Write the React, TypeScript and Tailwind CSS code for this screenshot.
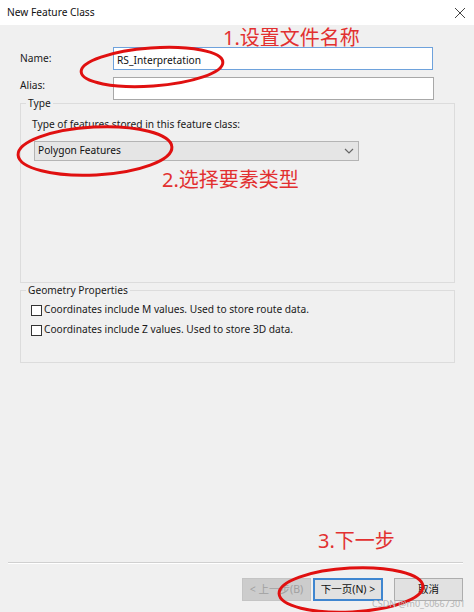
import React from 'react';

const font = { fontFamily: '"Noto Sans", "Noto Sans CJK SC", sans-serif' };

function Checkbox({ label }: { label: string }) {
  return (
    <div className="flex items-center h-[20px]">
      <span className="w-[11px] h-[11px] border border-[#333333] bg-white mr-[2px]" />
      <span className="text-[10.2px] text-[#1a1a1a]">{label}</span>
    </div>
  );
}

export default function App() {
  return (
    <div className="relative w-[474px] h-[612px] flex flex-col bg-white overflow-hidden" style={font}>
      {/* title bar */}
      <div className="h-[25px] flex items-center justify-between pl-[7px] pr-[8px] bg-white">
        <span className="text-[10.2px] text-[#111111]">New Feature Class</span>
        <svg width="12" height="12" viewBox="0 0 12 12" className="text-[#444444]">
          <path d="M1 1L11 11M11 1L1 11" stroke="currentColor" strokeWidth="1" fill="none" />
        </svg>
      </div>

      {/* body */}
      <div className="flex-1 flex flex-col bg-[#f0f0f0] pt-[24px]">
        <div className="flex items-center pl-[20px] h-[23px]">
          <span className="w-[93px] text-[10.2px] text-[#1a1a1a] -mt-[4px]">Name:</span>
          <div className="w-[320px] h-[23px] border border-[#6ea2dc] bg-white flex items-center pl-[3px] text-[10.2px] text-[#111111] -mt-[4px]">
            <span className="mt-[4px]">RS_Interpretation</span>
          </div>
        </div>
        <div className="flex items-center pl-[20px] h-[23px] mt-[5px]">
          <span className="w-[93px] text-[10.2px] text-[#1a1a1a] -mt-[6px]">Alias:</span>
          <div className="w-[321px] h-[23px] border border-[#a8a8a8] bg-white" />
        </div>

        {/* Type group */}
        <div className="relative ml-[20px] w-[435px] h-[180px] mt-[3px] border border-[#dcdcdc] pl-[11px] pt-[12px]">
          <span className="absolute -top-[8px] left-[5px] px-[2px] bg-[#f0f0f0] text-[10.2px] text-[#1a1a1a]">Type</span>
          <div className="text-[10.2px] text-[#1a1a1a] leading-[16px]">Type of features stored in this feature class:</div>
          <div className="mt-[9px] ml-[2px] w-[325px] h-[20px] border border-[#b4b4b4] bg-[#e5e5e5] flex items-center justify-between pl-[3px] pr-[4px]">
            <span className="text-[10.2px] text-[#111111]">Polygon Features</span>
            <svg width="10" height="6" viewBox="0 0 10 6">
              <path d="M1 1L5 5L9 1" stroke="#666666" strokeWidth="1.2" fill="none" />
            </svg>
          </div>
        </div>

        {/* Geometry group */}
        <div className="relative ml-[20px] w-[435px] h-[73px] mt-[7px] border border-[#dcdcdc] pl-[10px] pt-[9px]">
          <span className="absolute -top-[8px] left-[5px] px-[2px] bg-[#f0f0f0] text-[10.2px] text-[#1a1a1a]">Geometry Properties</span>
          <Checkbox label="Coordinates include M values. Used to store route data." />
          <Checkbox label="Coordinates include Z values. Used to store 3D data." />
        </div>

        <div className="flex-1" />

        {/* separator */}
        <div className="ml-[8px] w-[455px] border-t border-[#d0d0d0] border-b border-b-white" />

        {/* buttons */}
        <div className="flex justify-end pr-[11px] mt-[14px] mb-[11px]">
          <div className="w-[69px] h-[23px] border border-[#c4c4c4] bg-[#cccccc] flex items-center justify-center text-[10.5px] text-[#a0a0a0]">
            &lt; 上一步(B)
          </div>
          <div className="w-[70px] h-[23px] ml-[2px] border-2 border-[#3f86d0] bg-[#e1e1e1] flex items-center justify-center text-[10.5px] text-[#111111]">
            下一页(N) &gt;
          </div>
          <div className="w-[69px] h-[23px] ml-[11px] border border-[#adadad] bg-[#e1e1e1] flex items-center justify-center text-[10.5px] text-[#111111]">
            取消
          </div>
        </div>
      </div>

      {/* annotations */}
      <span className="absolute left-[223px] top-[25px] text-[20px] leading-[26px] text-[#e23030]">1.设置文件名称</span>
      <span className="absolute left-[162px] top-[167px] text-[20px] leading-[26px] text-[#e23030]">2.选择要素类型</span>
      <span className="absolute left-[318px] top-[528px] text-[20px] leading-[26px] text-[#e23030]">3.下一步</span>

      <svg className="absolute inset-0 pointer-events-none" width="474" height="612" viewBox="0 0 474 612">
        <ellipse cx="152" cy="67" rx="71" ry="19" transform="rotate(-4 152 67)" fill="none" stroke="#e01010" strokeWidth="3" />
        <ellipse cx="95" cy="151" rx="77" ry="24" transform="rotate(-3 95 151)" fill="none" stroke="#e01010" strokeWidth="3" />
        <ellipse cx="351" cy="590" rx="72" ry="22" transform="rotate(-3 351 590)" fill="none" stroke="#e01010" strokeWidth="3" />
      </svg>

      <span className="absolute left-[372px] top-[597px] text-[9px] leading-[13px] text-[#b4b4b4] whitespace-nowrap">CSDN @m0_60667301</span>
    </div>
  );
}
